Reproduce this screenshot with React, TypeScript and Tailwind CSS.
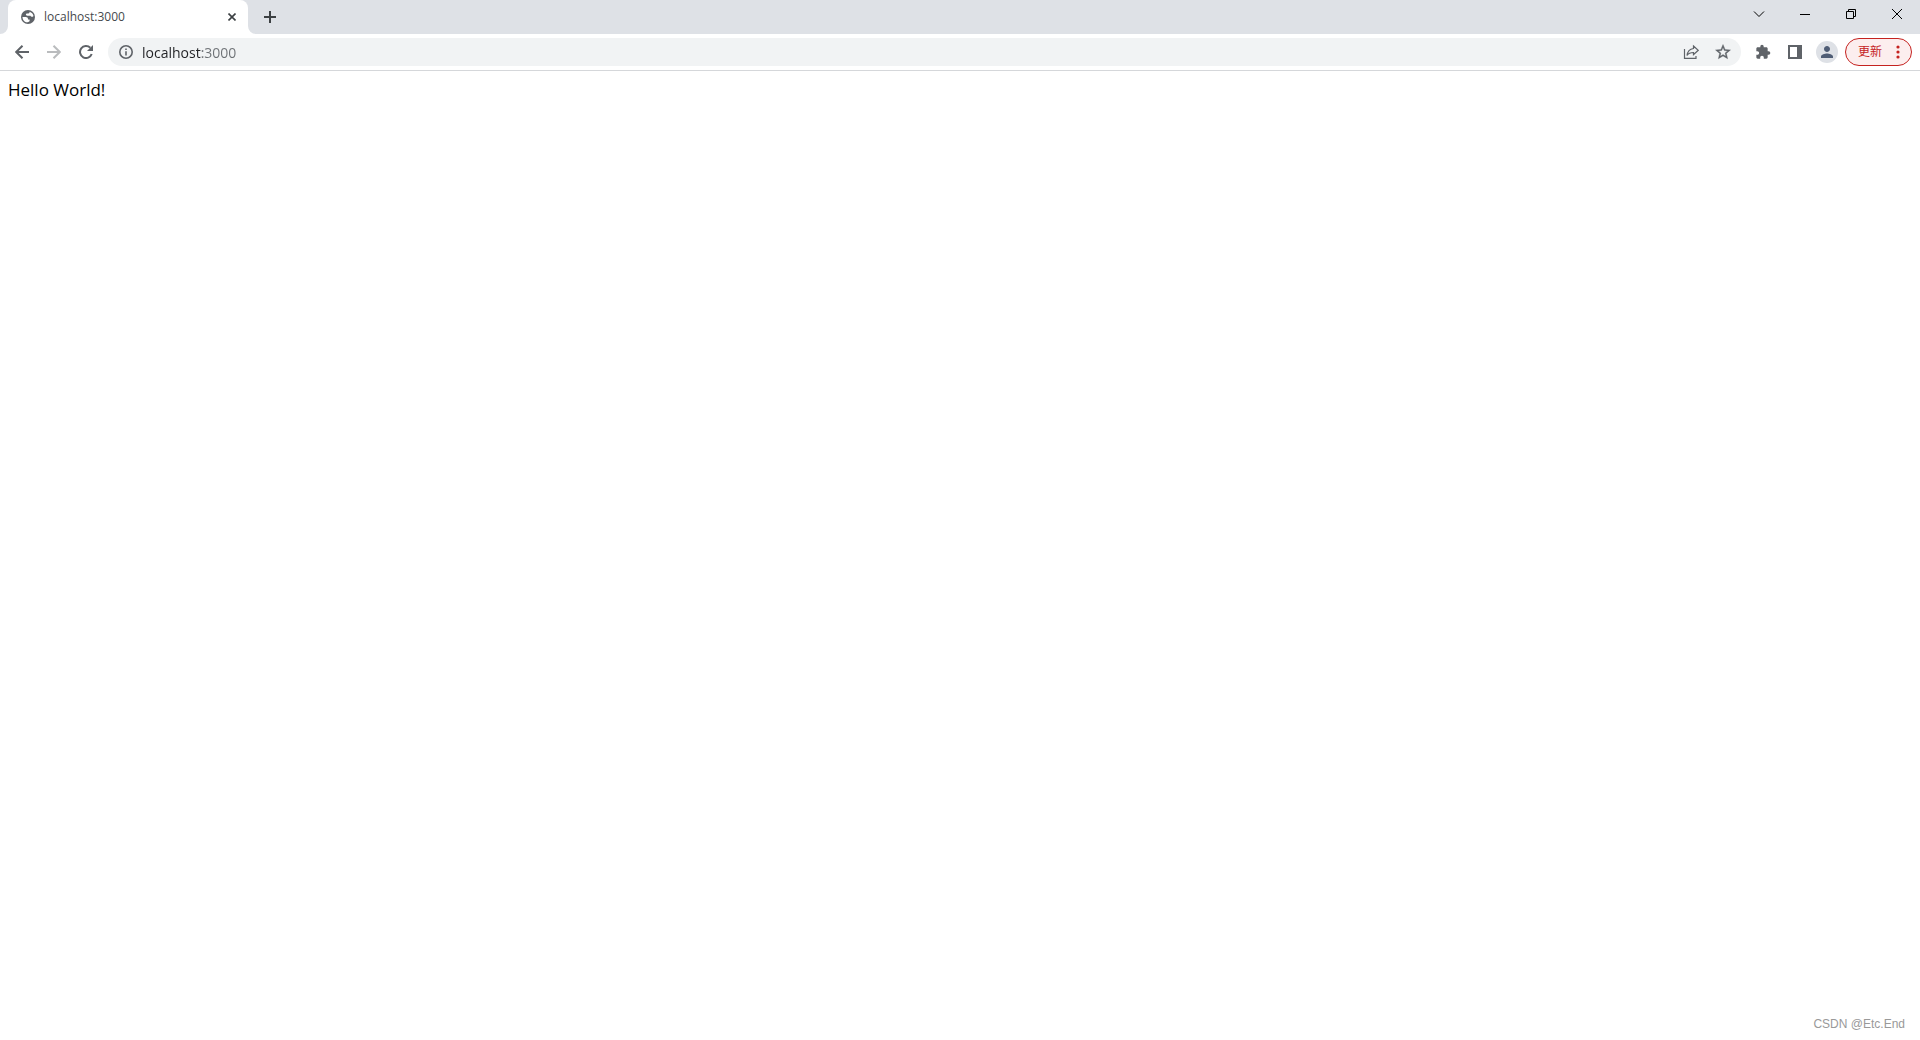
import React from "react";
import { MdExtension, MdPerson, MdStarOutline } from "react-icons/md";

type IconButtonProps = {
  label: string;
  className?: string;
  children: React.ReactNode;
};

function ToolButton({ label, className = "text-[#5f6368]", children }: IconButtonProps) {
  return (
    <button
      type="button"
      aria-label={label}
      className={`flex size-7 shrink-0 items-center justify-center rounded-full ${className}`}
    >
      {children}
    </button>
  );
}

function WindowButton({ label, children }: IconButtonProps) {
  return (
    <button
      type="button"
      aria-label={label}
      className="flex h-7 w-[46px] items-center justify-center text-black"
    >
      {children}
    </button>
  );
}

function ArrowIcon({ flip = false }: { flip?: boolean }) {
  return (
    <svg
      viewBox="0 0 14 14"
      className={`size-3.5 ${flip ? "-scale-x-100" : ""}`}
      fill="none"
      stroke="currentColor"
      strokeWidth="2"
      aria-hidden="true"
    >
      <path d="M14 7H1.500M7.500 .7L1.200 7l6.300 6.300" />
    </svg>
  );
}

function ReloadIcon() {
  return (
    <svg viewBox="0 0 14 14" className="size-3.5" fill="none" aria-hidden="true">
      <path d="M12.700 9A6 6 0 1 1 11.300 2.800" stroke="currentColor" strokeWidth="2" />
      <path d="M14 0v6H8z" fill="currentColor" />
    </svg>
  );
}

function InfoIcon() {
  return (
    <svg viewBox="0 0 14 14" className="size-3.5" fill="none" stroke="currentColor" aria-hidden="true">
      <circle cx="7" cy="7" r="6.200" strokeWidth="1.600" />
      <path d="M7 6.200v4.300M7 3.500v1.600" strokeWidth="1.600" />
    </svg>
  );
}

function GlobeIcon() {
  return (
    <svg viewBox="0 0 14 14" className="size-3.5 shrink-0" aria-hidden="true">
      <circle cx="7" cy="7" r="7" fill="#5f6368" />
      <path
        fill="#ffffff"
        d="M1.500 7h3.300c1.400 0 2.200.8 2.200 2v.6h1.600v1.200c0 .7-.6 1.200-1.300 1.200H6.500v.5C3.600 12.300 1.500 9.900 1.500 7zM8.600 1.700c2 .6 3.500 2.200 3.900 4.200-.5.700-1.200 1-2 .8-.6-.2-.8-.9-1.500-.9H6.300c-.8 0-1.400-.5-1.400-1.200s.6-1.200 1.300-1.200h1.200c.7 0 1.200-.6 1.200-1.300z"
      />
    </svg>
  );
}

function TabFlare({ flip = false }: { flip?: boolean }) {
  return (
    <svg
      viewBox="0 0 8 8"
      className={`size-2 shrink-0 self-end text-white ${flip ? "-scale-x-100" : ""}`}
      fill="currentColor"
      aria-hidden="true"
    >
      <path d="M8 0v8H0a8 8 0 0 0 8-8z" />
    </svg>
  );
}

function TabStrip() {
  return (
    <header className="flex h-[34px] bg-[#dee1e6]">
      <TabFlare />
      <div className="flex w-60 items-center rounded-t-lg bg-white pr-2 pl-[13px]">
        <GlobeIcon />
        <span className="ml-[9px] flex-1 text-xs text-[#45494d]">localhost:3000</span>
        <button
          type="button"
          aria-label="Close tab"
          className="flex size-4 items-center justify-center text-[#3c4043]"
        >
          <svg viewBox="0 0 8 8" className="size-2" stroke="currentColor" strokeWidth="1.6" aria-hidden="true">
            <path d="M.5 .5l7 7M7.5 .5l-7 7" />
          </svg>
        </button>
      </div>
      <TabFlare flip />
      <button
        type="button"
        aria-label="New tab"
        className="flex w-7 items-center justify-center text-[#3c4043]"
      >
        <svg viewBox="0 0 12 12" className="size-3" stroke="currentColor" strokeWidth="2" aria-hidden="true">
          <path d="M6 0v12M0 6h12" />
        </svg>
      </button>
      <div className="ml-auto flex">
        <WindowButton label="Search tabs">
          <svg viewBox="0 0 12 8" className="h-2 w-3" fill="none" stroke="currentColor" aria-hidden="true">
            <path d="M1 1.5l5 5 5-5" />
          </svg>
        </WindowButton>
        <WindowButton label="Minimize">
          <svg viewBox="0 0 10 10" className="size-2.5" fill="currentColor" aria-hidden="true">
            <path d="M0 5h10v1H0z" />
          </svg>
        </WindowButton>
        <WindowButton label="Restore">
          <svg viewBox="0 0 10 10" className="size-2.5" fill="none" stroke="currentColor" aria-hidden="true">
            <path d="M.5 2.5h7v7h-7zM2.5 2.5v-2h7v7h-2" />
          </svg>
        </WindowButton>
        <WindowButton label="Close">
          <svg viewBox="0 0 10 10" className="size-2.5" stroke="currentColor" aria-hidden="true">
            <path d="M0 0l10 10M10 0L0 10" />
          </svg>
        </WindowButton>
      </div>
    </header>
  );
}

function AddressBar() {
  return (
    <div className="mx-2 flex h-7 flex-1 items-center rounded-full bg-[#f1f3f4] px-1">
      <ToolButton label="View site information">
        <InfoIcon />
      </ToolButton>
      {/* The host is drawn dark and the port gray. */}
      <input
        type="text"
        aria-label="Address"
        defaultValue="localhost:3000"
        spellCheck={false}
        className="h-7 min-w-0 flex-1 bg-[linear-gradient(to_right,#202124_62px,#6d7175_62px)] bg-clip-text pl-0.5 text-sm text-transparent caret-[#202124] outline-none"
      />
      <div className="flex gap-1">
        <ToolButton label="Share this page">
          <svg viewBox="0 0 16 16" className="size-4" fill="none" stroke="currentColor" strokeWidth="1.2" aria-hidden="true">
            <path d="M1.500 5v9.400H13V12M10.500 2l4.700 4.300-4.700 4.300V8.500C7.500 8.500 5.500 9.200 4 11.500 4.500 7.500 7 5 10.500 4.500z" />
          </svg>
        </ToolButton>
        <ToolButton label="Bookmark this tab">
          <MdStarOutline className="size-[18px]" stroke="currentColor" strokeWidth="0.5" />
        </ToolButton>
      </div>
    </div>
  );
}

function Toolbar() {
  return (
    <nav className="flex h-[37px] items-center border-b border-[#d5d7da] bg-white px-2">
      <div className="flex gap-1">
        <ToolButton label="Back">
          <ArrowIcon />
        </ToolButton>
        <ToolButton label="Forward" className="text-[#babcbe]">
          <ArrowIcon flip />
        </ToolButton>
        <ToolButton label="Reload">
          <ReloadIcon />
        </ToolButton>
      </div>
      <AddressBar />
      <div className="flex items-center gap-1">
        <ToolButton label="Extensions">
          <MdExtension className="size-4" />
        </ToolButton>
        <ToolButton label="Side panel">
          <svg viewBox="0 0 14 14" className="size-3.5" fill="currentColor" aria-hidden="true">
            <path fillRule="evenodd" d="M0 0h14v14H0zM2 2v10h7V2z" />
          </svg>
        </ToolButton>
        <ToolButton label="Profile">
          <span className="flex size-[22px] items-center justify-center rounded-full bg-[#dee1e6] text-[#4f5d75]">
            <MdPerson className="size-[18px]" />
          </span>
        </ToolButton>
        <button
          type="button"
          className="flex h-7 w-[67px] items-center justify-between rounded-full border border-[#c5221f] bg-[#fceeee] pr-[11px] pl-3 text-xs text-[#c5221f]"
        >
          更新
          <svg viewBox="0 0 4 14" className="h-3.5 w-1" fill="currentColor" aria-hidden="true">
            <circle cx="2" cy="2" r="1.600" />
            <circle cx="2" cy="7" r="1.600" />
            <circle cx="2" cy="12" r="1.600" />
          </svg>
        </button>
      </div>
    </nav>
  );
}

export default function App() {
  return (
    <div className="flex min-h-screen flex-col bg-white font-['Open_Sans','Noto_Sans_CJK_SC',sans-serif]">
      <TabStrip />
      <Toolbar />
      <main className="flex flex-1 flex-col px-2 pt-2">
        <p className="text-[17px] leading-[22px] text-black">Hello World!</p>
        <footer className="mt-auto pr-[7px] pb-2 text-right font-['Liberation_Sans',sans-serif] text-xs text-[#999999]">
          CSDN @Etc.End
        </footer>
      </main>
    </div>
  );
}
